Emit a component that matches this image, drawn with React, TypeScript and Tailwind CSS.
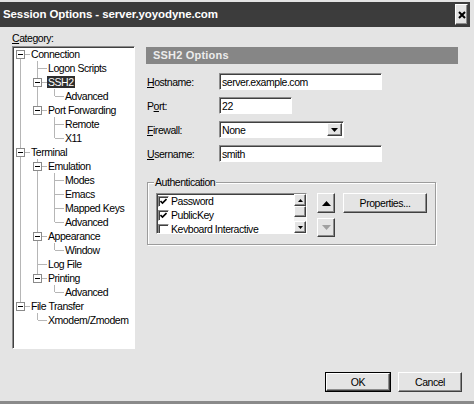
import React from 'react';

type Node = { label: string; children?: Node[]; selected?: boolean };

const tree: Node[] = [
  {
    label: 'Connection',
    children: [
      { label: 'Logon Scripts' },
      { label: 'SSH2', selected: true, children: [{ label: 'Advanced' }] },
      { label: 'Port Forwarding', children: [{ label: 'Remote' }, { label: 'X11' }] },
    ],
  },
  {
    label: 'Terminal',
    children: [
      {
        label: 'Emulation',
        children: [{ label: 'Modes' }, { label: 'Emacs' }, { label: 'Mapped Keys' }, { label: 'Advanced' }],
      },
      { label: 'Appearance', children: [{ label: 'Window' }] },
      { label: 'Log File' },
      { label: 'Printing', children: [{ label: 'Advanced' }] },
    ],
  },
  { label: 'File Transfer', children: [{ label: 'Xmodem/Zmodem' }] },
];

type Row = { node: Node; level: number; last: boolean; first: boolean; rails: boolean[] };

function flatten(nodes: Node[], level = 0, rails: boolean[] = [], out: Row[] = []): Row[] {
  nodes.forEach((node, i) => {
    const last = i === nodes.length - 1;
    out.push({ node, level, last, first: level === 0 && i === 0, rails });
    if (node.children) flatten(node.children, level + 1, [...rails, !last], out);
  });
  return out;
}

const LINE = '#b6b6b6';
const font = "font-['Liberation_Sans',Arial,sans-serif]";
const txt = 'text-[10.5px] leading-[12px] tracking-[-0.45px] text-black';
const raised =
  'border border-t-white border-l-white border-r-[#404040] border-b-[#404040] shadow-[inset_-1px_-1px_0_#8c8c8c] bg-[#e4e4e4]';
const sunken =
  'border border-t-[#8c8c8c] border-l-[#8c8c8c] border-r-white border-b-white shadow-[inset_1px_1px_0_#404040] bg-white';

const TreeRow: React.FC<{ row: Row }> = ({ row }) => {
  const { node, level, last, first, rails } = row;
  const w = 17 + 17 * level;
  const cx = 7.5 + 17 * level;
  return (
    <div className="flex h-[14px] items-center">
      <svg width={w} height={14} shapeRendering="crispEdges" className="shrink-0">
        {rails.map((on, k) =>
          on ? <line key={k} x1={7.5 + 17 * k} y1={0} x2={7.5 + 17 * k} y2={14} stroke={LINE} /> : null
        )}
        {!first && <line x1={cx} y1={0} x2={cx} y2={7} stroke={LINE} />}
        {!last && <line x1={cx} y1={7} x2={cx} y2={14} stroke={LINE} />}
        <line x1={cx} y1={7.5} x2={w} y2={7.5} stroke={LINE} />
        {node.children && (
          <>
            <rect x={3.5 + 17 * level} y={3.5} width={8} height={8} fill="#fff" stroke="#8a8a8a" />
            <line x1={5 + 17 * level} y1={7.5} x2={10 + 17 * level} y2={7.5} stroke="#000" />
          </>
        )}
      </svg>
      <span className={`${txt} px-[1px] ${node.selected ? 'bg-[#2e2e2e] text-white' : ''}`}>{node.label}</span>
    </div>
  );
};

const Check: React.FC<{ checked: boolean }> = ({ checked }) => (
  <span className={`${sunken} w-[11px] h-[11px] shrink-0 flex items-center justify-center`}>
    {checked && (
      <svg width="7" height="7" viewBox="0 0 7 7">
        <path d="M0.5 3 L2.5 5 L6.5 1" stroke="#000" strokeWidth="1.6" fill="none" />
      </svg>
    )}
  </span>
);

const Tri: React.FC<{ down?: boolean; color?: string; w?: number; h?: number }> = ({ down, color = '#000', w = 7, h = 4 }) => (
  <svg width={w} height={h} viewBox={`0 0 ${w} ${h}`}>
    <polygon points={down ? `0,0 ${w},0 ${w / 2},${h}` : `0,${h} ${w},${h} ${w / 2},0`} fill={color} />
  </svg>
);

const Field: React.FC<{ label: React.ReactNode; width: string; children: React.ReactNode }> = ({ label, width, children }) => (
  <div className="flex items-center h-[17px]">
    <span className={`${txt} w-[73px] pl-[1px]`}>{label}</span>
    <div className={`${sunken} ${width} h-[17px] flex items-center`}>{children}</div>
  </div>
);

export default function App() {
  const rows = flatten(tree);
  return (
    <div className={`${font} w-[474px] h-[404px] bg-[#e4e4e4] flex flex-col pt-[2px] pr-[4px] border-b-[3px] border-b-[#8a8a8a] overflow-hidden`}>
      {/* title bar */}
      <div className="h-[25px] bg-[#3c3c3c] flex items-start justify-between pl-[3px] pr-[2px]">
        <span className="text-white font-bold text-[11.5px] tracking-[-0.1px] leading-[25px]">
          Session Options - server.yoyodyne.com
        </span>
        <span className={`${raised} mt-[2px] w-[13px] h-[21px] flex items-center justify-center bg-[#e0e0e0]`}>
          <svg width="8" height="8" viewBox="0 0 8 8">
            <path d="M1 1 L7 7 M7 1 L1 7" stroke="#000" strokeWidth="2" />
          </svg>
        </span>
      </div>

      <div className="flex-1 flex flex-col">
        <div className="flex">
          {/* category tree */}
          <div className="ml-[12px] mt-[5px] w-[123px] flex flex-col">
            <span className={`${txt} h-[12px]`}>
              <span className="underline">C</span>ategory:
            </span>
            <div className={`${sunken} mt-[2px] h-[303px] overflow-hidden`}>
              {rows.map((r, i) => (
                <TreeRow key={i} row={r} />
              ))}
            </div>
          </div>

          {/* options */}
          <div className="ml-[11px] mt-[20px] w-[312px] flex flex-col">
            <div className="h-[17px] bg-[#868686] flex items-center pl-[7px]">
              <span className="text-[#ececec] font-bold text-[11px] tracking-[0.2px]">SSH2 Options</span>
            </div>

            <div className="mt-[9px] flex flex-col gap-[7px]">
              <Field label={<><span className="underline">H</span>ostname:</>} width="w-[163px]">
                <span className={`${txt} pl-[2px]`}>server.example.com</span>
              </Field>
              <Field label={<>P<span className="underline">o</span>rt:</>} width="w-[73px]">
                <span className={`${txt} pl-[2px]`}>22</span>
              </Field>
              <Field label={<><span className="underline">F</span>irewall:</>} width="w-[125px]">
                <span className={`${txt} pl-[2px] flex-1`}>None</span>
                <span className={`${raised} w-[15px] h-[13px] mr-[1px] flex items-center justify-center`}>
                  <Tri down w={7} h={4} />
                </span>
              </Field>
              <Field label={<><span className="underline">U</span>sername:</>} width="w-[163px]">
                <span className={`${txt} pl-[2px]`}>smith</span>
              </Field>
            </div>

            {/* authentication group */}
            <div className="relative mt-[20px] ml-[1px] w-[289px] border border-[#9c9c9c] shadow-[1px_1px_0_#fff,inset_1px_1px_0_#fff] pt-[10px] pl-[8px] pb-[7px]">
              <span className={`${txt} absolute -top-[7px] left-[6px] px-[1px] bg-[#e4e4e4]`}>Authentication</span>
              <div className="flex items-start">
                <div className={`${sunken} w-[151px] h-[41px] flex overflow-hidden`}>
                  <div className="flex-1 flex flex-col pl-[1px]">
                    {[
                      ['Password', true],
                      ['PublicKey', true],
                      ['Keyboard Interactive', false],
                    ].map(([l, c]) => (
                      <div key={l as string} className="h-[14px] flex items-center gap-[2px] shrink-0">
                        <Check checked={c as boolean} />
                        <span className={txt}>{l as string}</span>
                      </div>
                    ))}
                  </div>
                  <div className="w-[12px] flex flex-col bg-[#f2f2f2]">
                    <span className={`${raised} h-[12px] flex items-center justify-center`}>
                      <Tri w={5} h={3} />
                    </span>
                    <span className={`${raised} h-[11px]`} />
                    <span className="flex-1" />
                    <span className={`${raised} h-[12px] flex items-center justify-center`}>
                      <Tri down w={5} h={3} />
                    </span>
                  </div>
                </div>

                <div className="ml-[10px] flex flex-col gap-[5px]">
                  <span className={`${raised} w-[18px] h-[20px] flex items-center justify-center`}>
                    <Tri w={9} h={5} />
                  </span>
                  <span className={`${raised} w-[18px] h-[19px] flex items-center justify-center`}>
                    <Tri down w={9} h={5} color="#a0a0a0" />
                  </span>
                </div>

                <button className={`${raised} ml-[8px] w-[84px] h-[20px] flex items-center justify-center ${txt}`}>
                  Properties...
                </button>
              </div>
            </div>
          </div>
        </div>

        <div className="flex-1" />

        {/* footer */}
        <div className="flex justify-end gap-[7px] pr-[8px] pb-[9px]">
          <button className="w-[66px] h-[20px] border border-black flex">
            <span className={`${raised} flex-1 flex items-center justify-center ${txt}`}>OK</span>
          </button>
          <button className={`${raised} w-[64px] h-[20px] flex items-center justify-center ${txt}`}>Cancel</button>
        </div>
      </div>
    </div>
  );
}
